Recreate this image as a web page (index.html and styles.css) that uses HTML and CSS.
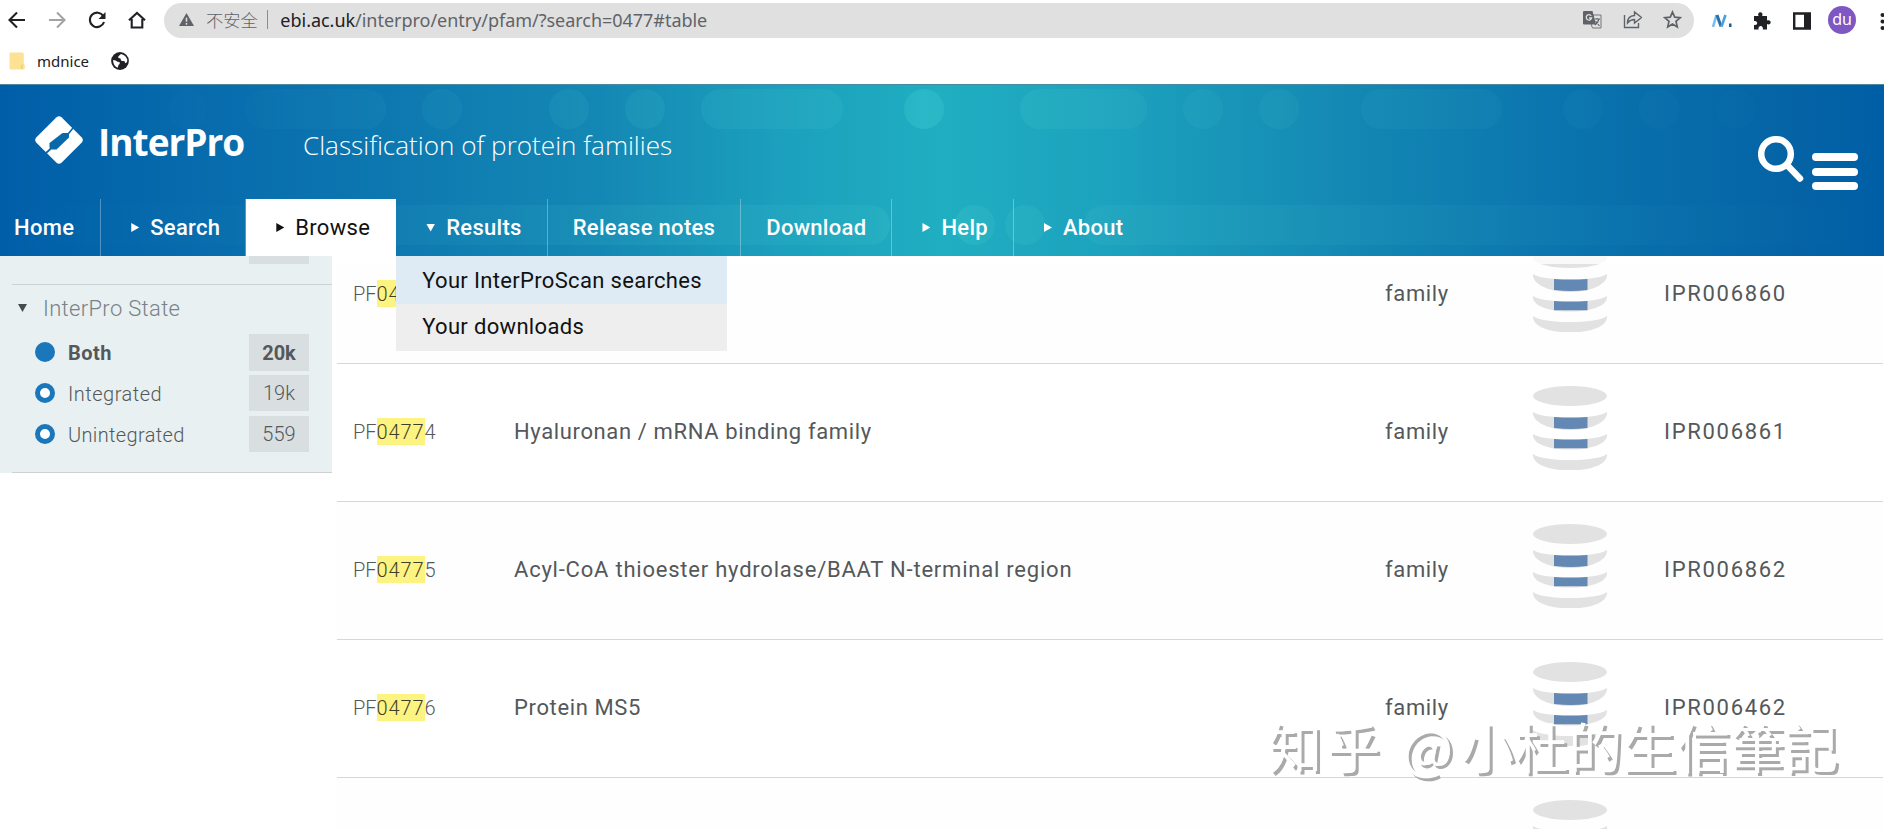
FILE: index.html
```
<!DOCTYPE html>
<html lang="en">
<head>
  <meta charset="UTF-8">
  <meta name="viewport" content="width=device-width, initial-scale=1.0">
  <title>InterPro</title>
  <link rel="stylesheet" href="styles.css">
</head>
<body>
  <div class="browser">
    <div class="toolbar">
      <svg class="tool back" viewBox="0 0 18 18"><path d="M17 9H2M9 1.5 1.5 9 9 16.5"/></svg>
      <svg class="tool forward" viewBox="0 0 18 18"><path d="M1 9h15M9 1.5 16.5 9 9 16.5"/></svg>
      <svg class="tool" viewBox="0 0 18 18"><path d="M15.2 5A7.2 7.2 0 1 0 16 11"/><path class="solid" d="M17.5 1v7h-7z"/></svg>
      <svg class="tool" viewBox="0 0 18 18"><path d="M1 9.3 9 2l8 7.3M3.7 8v8.5h10.6V8"/></svg>
      <div class="address">
        <svg class="warn" viewBox="0 0 16 16"><path d="M8 1l8 14H0z" fill="#5f6368"/><path d="M8 6v4.5M8 11.8v1.7" stroke="#e0e0e0" stroke-width="1.6"/></svg>
        <span class="insecure">不安全</span>
        <span class="bar"></span>
        <span class="url"><b>ebi.ac.uk</b>/interpro/entry/pfam/?search=0477#table</span>
        <div class="address-icons">
          <svg width="19" height="19" viewBox="0 0 19 19"><path d="M8 5h10v13H9.500L8 14" fill="none" stroke="#777" stroke-width="1"/><path d="M1 1h8.500l3.500 13.500H1q-1 0-1-1V2q0-1 1-1z" fill="#5f6368"/><path d="M8.200 5.800A2.700 2.700 0 1 0 8.600 8H6" fill="none" stroke="#e0e0e0" stroke-width="1.300"/><path d="M11.500 9h5.500M14 8v1M16 9q-1 4-4 6M12.500 11l4 5" fill="none" stroke="#5f6368" stroke-width="1.200"/></svg>
          <svg width="19" height="19" viewBox="0 0 19 19"><path d="M1.500 5v12.500h14V13M4.500 13q0-7 7-7.500V2l7 5.500-7 5.500V9.500q-4 0-7 3.500z" fill="none" stroke="#5f6368" stroke-width="1.400"/></svg>
          <svg width="19" height="19" viewBox="0 0 19 19"><path d="M9.500 2l2.200 5.200 5.600.5-4.300 3.700 1.300 5.500-4.800-2.900-4.800 2.900L6 11.400 1.700 7.700l5.600-.5z" fill="none" stroke="#5f6368" stroke-width="1.700"/></svg>
        </div>
      </div>
      <div class="extensions">
        <svg width="20" height="14" viewBox="0 0 20 14"><path d="M1 13 4.500 1" stroke="#7cc0ea" stroke-width="2.600"/><path d="M5 1l4 11.500" stroke="#2c6fa8" stroke-width="3"/><path d="M9.500 12.500 13.500 1" stroke="#4aa0d8" stroke-width="2.600"/><path d="M17 9.500h2.500V13H17z" fill="#1b5c94"/></svg>
        <svg width="18" height="18" viewBox="0 0 18 18"><path d="M1 4h4.500C4.500 1.500 6 .3 7.300.3S10.200 1.500 9.200 4H14v4.500c2.500-1 3.700.5 3.700 1.800S16.500 13 14 12.100V17.500H9.800c.6-2.200-.8-3.400-2.100-3.400s-2.800 1.200-2.100 3.400H1v-4.500c2.200.5 3.200-.6 3.200-1.900S3.200 8.500 1 9z" fill="#202124"/></svg>
        <svg width="18" height="18" viewBox="0 0 18 18"><path d="M1.200 1.500h15.600v15H1.200z" fill="none" stroke="#202124" stroke-width="2.400"/><path d="M11 1h6v16h-6z" fill="#202124"/></svg>
        <span class="avatar">du</span>
        <svg class="dots" width="4" height="18" viewBox="0 0 4 18"><circle cx="2.500" cy="3" r="2"/><circle cx="2.500" cy="9.500" r="2"/><circle cx="2.500" cy="16" r="2"/></svg>
      </div>
    </div>
    <div class="bookmarks">
      <svg width="16" height="18" viewBox="0 0 16 18"><path d="M1.500.5h12q1.300 0 1.300 1.500v10q1 .5 1 2v2q0 1.500-1.500 1.500H1.500Q.5 17.500.5 16V2Q.5.500 1.500.5z" fill="#fde293"/><path d="M13 17q-1-2 .3-4.500" stroke="#e9c75c" fill="none"/></svg>
      <span class="bookmark">mdnice</span>
      <svg width="18" height="18" viewBox="0 0 18 18"><circle cx="9" cy="9" r="8.900" fill="#202124"/><path d="M2 8q3 .3 4.500 1.800l2 .2q1 2-1 3l-.8 2.800Q2.500 14.500 2 8zM10 2q-1.500 1-3 3 .3 1.500 2.200 1.300L10.500 9h2.800l1 2.300q1.500-.3 2-2.300Q16 3.500 10 2z" fill="#fff"/></svg>
    </div>
  </div>

  <header class="header">
    <svg class="pattern" viewBox="0 0 1884 172" preserveAspectRatio="none">
      <defs>
        <linearGradient id="fade" gradientUnits="userSpaceOnUse" x1="0" y1="0" x2="1884" y2="0">
          <stop offset="0" stop-color="#3cb4c4" stop-opacity="0"/>
          <stop offset=".12" stop-color="#3cb4c4" stop-opacity=".03"/>
          <stop offset=".36" stop-color="#3cb8c6" stop-opacity=".18"/>
          <stop offset=".46" stop-color="#3cc0c8" stop-opacity=".2"/>
          <stop offset=".49" stop-color="#3cccd0" stop-opacity=".38"/>
          <stop offset=".53" stop-color="#3cc0c8" stop-opacity=".24"/>
          <stop offset=".64" stop-color="#3cb4c4" stop-opacity=".15"/>
          <stop offset=".9" stop-color="#3cb4c4" stop-opacity=".03"/>
          <stop offset="1" stop-color="#3cb4c4" stop-opacity="0"/>
        </linearGradient>
      </defs>
      <g fill="url(#fade)">
        <rect x="169" y="5" width="38" height="40" rx="19"/>
        <rect x="245" y="5" width="141" height="40" rx="20"/>
        <rect x="422" y="5" width="40" height="40" rx="20"/>
        <rect x="549" y="5" width="40" height="40" rx="20"/>
        <rect x="625" y="5" width="40" height="40" rx="20"/>
        <rect x="701" y="5" width="142" height="40" rx="20"/>
        <rect x="904" y="5" width="40" height="40" rx="20"/>
        <rect x="1020" y="5" width="127" height="40" rx="20"/>
        <rect x="1183" y="5" width="40" height="40" rx="20"/>
        <rect x="1259" y="5" width="40" height="40" rx="20"/>
        <rect x="1361" y="5" width="141" height="40" rx="20"/>
        <rect x="1563" y="5" width="40" height="40" rx="20"/>
        <rect x="1639" y="5" width="40" height="40" rx="20"/>
        <rect x="1716" y="5" width="40" height="40" rx="20"/>
        <rect x="20" y="121" width="870" height="40" rx="20"/>
        <rect x="955" y="121" width="40" height="40" rx="20"/>
        <rect x="1005" y="121" width="40" height="40" rx="20"/>
        <rect x="1084" y="121" width="780" height="40" rx="20"/>
      </g>
    </svg>

    <div class="brand">
      <svg class="logo" viewBox="0 0 48 48">
        <path d="M21.500 1.200q2.500-2 5 0L46.800 21.500q2 2.500 0 5L26.500 46.800q-2.500 2-5 0L1.200 26.500q-2-2.500 0-5z" fill="#fff"/>
        <path d="M14.500 31V27L27.500 17h6.500v4.500L21.500 33.500H15z" fill="#0869aa"/>
        <path d="M33.500 17.500 38 12M15.500 33 11 37" stroke="#0869aa" stroke-width="1.700"/>
      </svg>
      <span class="name">InterPro</span>
      <span class="tagline">Classification of protein families</span>
      <div class="actions">
        <svg class="search" width="46" height="46" viewBox="0 0 46 46"><circle cx="18" cy="18" r="14.800"/><path d="M29 29l13 13.500"/></svg>
        <div class="burger"><i></i><i></i><i></i></div>
      </div>
    </div>

    <nav class="nav">
      <a class="item home">Home</a>
      <a class="item"><i class="caret"></i>Search</a>
      <a class="item active"><i class="caret"></i>Browse</a>
      <div class="item"><i class="caret down"></i>Results
        <div class="dropdown">
          <a class="hover">Your InterProScan searches</a>
          <a>Your downloads</a>
        </div>
      </div>
      <a class="item">Release notes</a>
      <a class="item">Download</a>
      <a class="item"><i class="caret"></i>Help</a>
      <a class="item last"><i class="caret"></i>About</a>
    </nav>
  </header>

  <svg width="0" height="0" class="defs">
    <symbol id="db" viewBox="0 0 74 84">
      <g fill="#e2e2e2">
        <ellipse cx="37" cy="10" rx="37" ry="10"/>
        <path d="M0 26C10 33.500 64 33.500 74 26C75 36 58 44 37 44S-1 36 0 26z"/>
        <path d="M0 48C10 55.500 64 55.500 74 48C75 58 58 63.500 37 63.500S-1 58 0 48z"/>
        <path d="M0 68C10 76 64 76 74 68C75 78 58 84.500 37 84.500S-1 78 0 68z"/>
      </g>
      <path d="M21 31q16.500 1.200 33.500 0v11q-16.500 2-33.500 0z" fill="#6388b3"/>
      <path d="M21 53q16.500 1.200 33.500 0v9.200H21z" fill="#6388b3"/>
    </symbol>
  </svg>

  <main class="content">
    <aside class="sidebar">
      <div class="cut"><span></span></div>
      <section class="filter">
        <h2><i class="caret down"></i>InterPro State</h2>
        <div class="option selected"><i class="radio"></i><span class="label">Both</span><span class="count">20k</span></div>
        <div class="option"><i class="radio"></i><span class="label">Integrated</span><span class="count">19k</span></div>
        <div class="option"><i class="radio"></i><span class="label long">Unintegrated</span><span class="count">559</span></div>
      </section>
    </aside>

    <div class="table">
      <div class="row">
        <span class="acc">PF<mark>04</mark></span>
        <span class="desc"></span>
        <span class="type">family</span>
        <svg class="db"><use href="#db"/></svg>
        <span class="ipr">IPR006860</span>
      </div>
      <div class="row">
        <span class="acc">PF<mark>0477</mark>4</span>
        <span class="desc">Hyaluronan / mRNA binding family</span>
        <span class="type">family</span>
        <svg class="db"><use href="#db"/></svg>
        <span class="ipr">IPR006861</span>
      </div>
      <div class="row">
        <span class="acc">PF<mark>0477</mark>5</span>
        <span class="desc wide">Acyl-CoA thioester hydrolase/BAAT N-terminal region</span>
        <span class="type">family</span>
        <svg class="db"><use href="#db"/></svg>
        <span class="ipr">IPR006862</span>
      </div>
      <div class="row">
        <span class="acc">PF<mark>0477</mark>6</span>
        <span class="desc">Protein MS5</span>
        <span class="type">family</span>
        <svg class="db"><use href="#db"/></svg>
        <span class="ipr">IPR006462</span>
      </div>
      <div class="row">
        <span class="acc"></span>
        <span class="desc"></span>
        <span class="type"></span>
        <svg class="db"><use href="#db"/></svg>
        <span class="ipr"></span>
      </div>
      <div class="sticky-edge"></div>
    </div>
  </main>

  <div class="watermark"><span class="site">知乎</span> <span class="at">@</span>小杜的生信筆記</div>
</body>
</html>
```
FILE: styles.css
```
:root {
  --text: #54585a;
  --line: #d5d8da;
  --panel: #e8f0f2;
  --blue: #1a77bb;
}
* {
  box-sizing: border-box;
}
body {
  margin: 0;
  height: 829px;
  display: flex;
  flex-direction: column;
  overflow: hidden;
  position: relative;
  background: #fff;
  color: var(--text);
  font-family: Roboto, "Noto Sans CJK SC", sans-serif;
  font-size: 22px;
}
svg {
  display: block;
  flex: none;
}
.defs {
  position: absolute;
}

/* browser chrome */
.browser {
  height: 84px;
  flex: none;
  font-family: "Noto Sans", "Noto Sans CJK SC", sans-serif;
}
.toolbar {
  display: flex;
  align-items: center;
  height: 41px;
  padding-left: 8px;
}
.tool {
  width: 18px;
  height: 18px;
  margin: 0 22px 1px 0;
  fill: none;
  stroke: #202124;
  stroke-width: 2.1;
}
.tool:nth-child(4) {
  margin-right: 18px;
}
.tool .solid {
  fill: #202124;
  stroke: none;
}
.forward {
  stroke: #a3a3a3;
}
.address {
  display: flex;
  align-items: center;
  width: 1530px;
  height: 35px;
  padding: 0 0 2px 15px;
  border-radius: 18px;
  background: #e0e0e0;
  color: #5f6368;
  font-size: 18px;
}
.warn {
  width: 15px;
  height: 15px;
}
.insecure {
  margin-left: 12px;
  font-size: 17.300px;
  font-family: "Noto Sans CJK SC", sans-serif;
  font-weight: 300;
}
.bar {
  width: 1.500px;
  height: 19px;
  margin: 0 12px 0 9px;
  background: #8a8c8e;
}
.url b {
  font-weight: 400;
  color: #202124;
}
.url {
  letter-spacing: -0.03px;
}
.address-icons {
  display: flex;
  gap: 21px;
  margin-left: auto;
  margin-right: 12px;
}
.extensions {
  display: flex;
  align-items: center;
  margin-left: 18px;
}
.extensions svg:nth-child(2) {
  margin: 0 22px 0 21px;
}
.avatar {
  width: 28px;
  height: 28px;
  margin: 0 24px 1px 17px;
  border-radius: 50%;
  background: #7e57c2;
  color: #fff;
  font-size: 16px;
  line-height: 27px;
  text-align: center;
}
.dots {
  fill: #202124;
}
.bookmarks {
  display: flex;
  align-items: center;
  height: 40px;
  padding-left: 9px;
  font-size: 15px;
  color: #202124;
}
.bookmark {
  margin: 0 22px 0 12px;
}

/* site header */
.header {
  position: relative;
  z-index: 2;
  display: flex;
  flex-direction: column;
  flex: none;
  height: 172px;
  background: linear-gradient(90deg, #005ea8 0%, #0b73af 17%, #1488b4 32%, #1b9fbd 41%, #20aec1 50%, #1ca2be 59%, #1489b4 71%, #0a74ae 83%, #0462a5 96%, #005ea6 100%);
  color: #fff;
}
.header::before {
  content: "";
  height: 1px;
  flex: none;
  background: #4a8ba0;
}
.pattern {
  position: absolute;
  inset: 0;
  width: 100%;
  height: 100%;
}
.brand {
  position: relative;
  display: flex;
  height: 114px;
  padding-left: 35px;
}
.logo {
  width: 48px;
  height: 48px;
  margin-top: 31px;
}
.name {
  width: 145px;
  margin: 31px 0 0 15px;
  font: 700 37px/52px "Open Sans", sans-serif;
  letter-spacing: -1px;
}
.tagline {
  margin: 40px 0 0 60px;
  font: 300 26.100px/40px "Open Sans", sans-serif;
}
.actions {
  display: flex;
  margin-left: auto;
  padding: 51px 26px 0 0;
}
.search {
  fill: none;
  stroke: #fff;
  stroke-width: 6.500;
  stroke-linecap: round;
}
.burger {
  display: flex;
  flex-direction: column;
  gap: 6.500px;
  width: 46px;
  margin: 17px 0 0 8px;
}
.burger i {
  height: 8px;
  border-radius: 4px;
  background: #fff;
}
.nav {
  position: relative;
  display: flex;
  height: 57px;
  font-weight: 500;
  letter-spacing: 0.3px;
}
.item {
  position: relative;
  display: flex;
  align-items: center;
  padding: 0 25px;
  border-right: 1px solid rgba(255, 255, 255, 0.3);
  white-space: nowrap;
}
.home {
  padding: 0 26px 0 14px;
}
.last {
  border: none;
}
.caret {
  width: 8px;
  height: 9px;
  margin: 0 11px 0 5px;
  background: currentColor;
  clip-path: polygon(0 0, 100% 50%, 0 100%);
}
.caret.down {
  width: 9px;
  height: 8px;
  clip-path: polygon(0 0, 100% 0, 50% 100%);
}
.active {
  background: #fff;
  color: #111;
  font-weight: 400;
}
.dropdown {
  position: absolute;
  top: 100%;
  left: 0;
  width: 331px;
  color: #111;
  font-weight: 400;
  letter-spacing: 0.330px;
}
.dropdown a {
  display: block;
  height: 47px;
  padding-left: 26px;
  line-height: 46px;
  background: #eee;
}
.dropdown .hover {
  height: 48px;
  line-height: 49px;
  background: #deebf5;
}

/* page body */
.content {
  display: flex;
  align-items: flex-start;
  flex: 1;
  min-height: 0;
  overflow: hidden;
}
.sidebar {
  width: 332px;
  height: 217px;
  flex: none;
  background: var(--panel);
}
.cut {
  height: 28px;
}
.cut span {
  display: block;
  width: 60px;
  height: 8px;
  margin-left: 249px;
  background: #d9dfe1;
}
.filter {
  height: 189px;
  margin-left: 12px;
  border-top: 1px solid #ccd2d4;
  border-bottom: 1px solid #ccd2d4;
  font-size: 20px;
}
.filter h2 {
  display: flex;
  align-items: center;
  height: 46px;
  margin: 0 0 3px;
  font-size: 22px;
  font-weight: 300;
  letter-spacing: 0.330px;
  color: #7a8286;
}
.filter .caret {
  margin: 0 16px 0 6px;
  color: #454b4e;
}
.option {
  display: flex;
  align-items: center;
  height: 36px;
  margin-bottom: 5px;
  padding: 0 23px 0 23px;
  font-weight: 300;
}
.option.selected {
  height: 37px;
  margin-bottom: 4px;
  font-weight: 700;
}
.radio {
  width: 20px;
  height: 20px;
  margin-bottom: 1px;
  border: 5px solid var(--blue);
  border-radius: 50%;
  background: #fff;
}
.selected .radio {
  background: var(--blue);
}
.label {
  margin: 1px 0 0 13px;
  letter-spacing: 0.500px;
}
.long {
  letter-spacing: 0.350px;
}
.count {
  width: 60px;
  height: 36px;
  margin-left: auto;
  background: #d9dfe1;
  line-height: 36px;
  text-align: center;
}
.selected .count {
  height: 37px;
  line-height: 38px;
}
.table {
  position: relative;
  width: 1546px;
  margin: -30px 0 0 5px;
}
.row {
  display: grid;
  grid-template-columns: 161px 871px 148px 131px 1fr;
  align-items: center;
  height: 138px;
  padding-left: 16px;
  border-bottom: 1px solid var(--line);
  letter-spacing: 0.630px;
}
.row span {
  margin-bottom: 2px;
}
.row:nth-child(odd) {
  background: #fefefe;
}
.acc {
  font-size: 20px;
  font-weight: 300;
  letter-spacing: 0;
}
.acc mark {
  display: inline-block;
  height: 27px;
  line-height: 28px;
  background: #fdf381;
  color: #3d3f28;
  letter-spacing: 0.900px;
}
.row .wide {
  letter-spacing: 0.780px;
}
.db {
  width: 74px;
  height: 84px;
  margin-bottom: 9px;
}
.ipr {
  letter-spacing: 1.700px;
}
.sticky-edge {
  position: absolute;
  top: 30px;
  left: 0;
  width: 100%;
  height: 8px;
  background: rgba(255, 255, 255, 0.8);
}

.watermark {
  position: absolute;
  top: 706px;
  left: 1268px;
  color: #fff;
  font: 400 54px/80px "Noto Sans CJK SC", sans-serif;
  text-shadow: 3px 3px 0 #aaa;
  white-space: nowrap;
  z-index: 3;
}
.site {
  letter-spacing: 4px;
}
.at {
  margin: 0 7px 0 6px;
}
```
